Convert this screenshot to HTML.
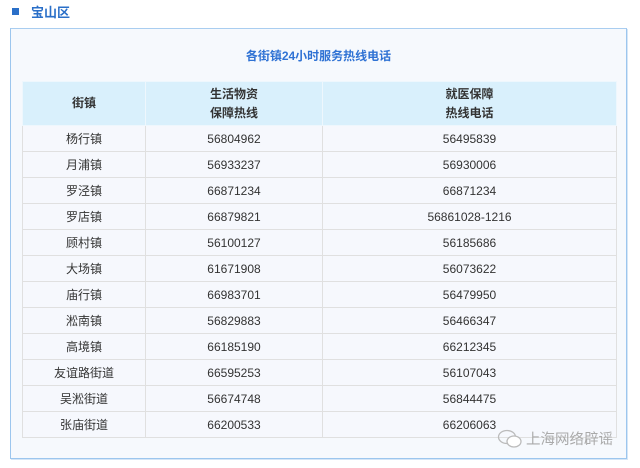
<!DOCTYPE html>
<html><head><meta charset="utf-8"><style>
*{margin:0;padding:0;box-sizing:border-box}
body{width:640px;height:468px;background:#fff;font-family:"Liberation Sans","Noto Sans CJK SC",sans-serif;position:relative;overflow:hidden;color:#333}
.hd{position:absolute;left:12px;top:2px;height:18px;display:flex;align-items:center}
.sq{width:7px;height:7px;background:#2a6fc8;margin-right:12px}
.hd span{color:#2a6fc8;font-weight:bold;font-size:13px}
.box{position:absolute;left:10px;top:28px;width:617px;height:431px;border:1px solid #9cc6ee;border-top:1px solid #a9cdf0;background:#f6f9fd;box-shadow:1px 1px 0 #d5e6f7}
.t{position:absolute;left:0;right:0;top:18px;text-align:center;color:#2f72d4;font-weight:bold;font-size:12px}
table{position:absolute;left:11px;top:52px;border-collapse:collapse;width:595px;font-size:12px}
td,th{border:1px solid #e0e0e0;text-align:center;height:26px;background:#f6f8fd}
th{background:#d9f0fc;height:44px;font-weight:bold;font-size:12px;line-height:19px;color:#333;border-color:#eef7fd}
.wm{position:absolute;left:497px;top:428px;color:#aaa;font-size:14.5px;display:flex;align-items:center}
</style></head><body>
<div class="hd"><div class="sq"></div><span>宝山区</span></div>
<div class="box">
<div class="t">各街镇24小时服务热线电话</div>
<table>
<tr><th style="width:123px">街镇</th><th style="width:177px">生活物资<br>保障热线</th><th>就医保障<br>热线电话</th></tr>
<tr><td>杨行镇</td><td>56804962</td><td>56495839</td></tr>
<tr><td>月浦镇</td><td>56933237</td><td>56930006</td></tr>
<tr><td>罗泾镇</td><td>66871234</td><td>66871234</td></tr>
<tr><td>罗店镇</td><td>66879821</td><td>56861028-1216</td></tr>
<tr><td>顾村镇</td><td>56100127</td><td>56185686</td></tr>
<tr><td>大场镇</td><td>61671908</td><td>56073622</td></tr>
<tr><td>庙行镇</td><td>66983701</td><td>56479950</td></tr>
<tr><td>淞南镇</td><td>56829883</td><td>56466347</td></tr>
<tr><td>高境镇</td><td>66185190</td><td>66212345</td></tr>
<tr><td>友谊路街道</td><td>66595253</td><td>56107043</td></tr>
<tr><td>吴淞街道</td><td>56674748</td><td>56844475</td></tr>
<tr><td>张庙街道</td><td>66200533</td><td>66206063</td></tr>
</table>
</div>
<div class="wm"><svg width="26" height="20" viewBox="0 0 26 20"><ellipse cx="10" cy="8" rx="8.5" ry="6.5" fill="none" stroke="#bbb" stroke-width="1.3"/><ellipse cx="17" cy="12.5" rx="7" ry="5.5" fill="#fff" stroke="#bbb" stroke-width="1.3"/></svg><span style="margin-left:3px">上海网络辟谣</span></div>
</body></html>
